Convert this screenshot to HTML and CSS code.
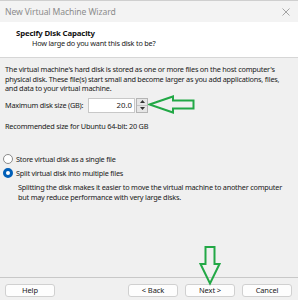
FILE: index.html
```html
<!DOCTYPE html>
<html>
<head>
<meta charset="utf-8">
<link rel="stylesheet" href="styles.css">
</head>
<body>
<div class="window">
  <div class="titlebar">
    <span class="title">New Virtual Machine Wizard</span>
    <svg class="close" width="8" height="8" viewBox="0 0 8 8"><path d="M0.5 0.5L7.5 7.5M7.5 0.5L0.5 7.5" stroke="#9a9a9a" stroke-width="0.9" fill="none"/></svg>
  </div>
  <div class="header">
    <div class="h-title">Specify Disk Capacity</div>
    <div class="h-sub">How large do you want this disk to be?</div>
  </div>
  <div class="content">
    <p class="desc">The virtual machine's hard disk is stored as one or more files on the host computer's physical disk. These file(s) start small and become larger as you add applications, files, and data to your virtual machine.</p>
    <div class="size-row">
      <span class="label">Maximum disk size (GB):</span>
      <div class="input">20.0</div>
      <div class="spin">
        <div class="spin-btn"><svg width="5" height="3" viewBox="0 0 5 3"><path d="M0 3L2.5 0L5 3Z" fill="#333"/></svg></div>
        <div class="spin-btn"><svg width="5" height="3" viewBox="0 0 5 3"><path d="M0 0L2.5 3L5 0Z" fill="#333"/></svg></div>
      </div>
      <svg class="arrow-left" width="48" height="20" viewBox="0 0 48 20"><path d="M1.5 9.5L25 1.5V5.5H45.5V13.5H25V17.5Z" fill="none" stroke="#22a846" stroke-width="2" stroke-linejoin="miter"/></svg>
    </div>
    <div class="recommend">Recommended size for Ubuntu 64-bit: 20 GB</div>
    <div class="options">
      <div class="radio-row"><span class="radio"></span><span>Store virtual disk as a single file</span></div>
      <div class="radio-row"><span class="radio checked"></span><span>Split virtual disk into multiple files</span></div>
      <p class="note">Splitting the disk makes it easier to move the virtual machine to another computer but may reduce performance with very large disks.</p>
    </div>
  </div>
  <div class="footer">
    <button class="btn">Help</button>
    <div class="spacer"></div>
    <button class="btn">&lt; Back</button>
    <button class="btn next">Next &gt;
      <svg class="arrow-down" width="22" height="40" viewBox="0 0 22 40"><path d="M6.5 1V18H1.5L11 37.5L20.5 18H15.5V1Z" fill="none" stroke="#22a846" stroke-width="2" stroke-linejoin="miter"/></svg>
    </button>
    <button class="btn">Cancel</button>
  </div>
</div>
</body>
</html>
```
FILE: styles.css
```css
* { box-sizing: border-box; }
html, body { margin: 0; padding: 0; }
body {
  width: 298px;
  height: 300px;
  overflow: hidden;
  background: #f0f0f0;
  font-family: "Noto Sans", "Open Sans", sans-serif;
  font-size: 7.3px;
  letter-spacing: -0.22px;
  color: #1a1a1a;
}
.window {
  height: 300px;
  display: flex;
  flex-direction: column;
  border-top: 1px solid #cfcfcf;
}
.titlebar {
  height: 21px;
  background: #f3f3f3;
  display: flex;
  align-items: center;
  justify-content: space-between;
  padding: 0 8px 0 5px;
}
.title {
  font-size: 8.6px;
  letter-spacing: -0.1px;
  color: #8c8c8c;
}
.close { display: block; }
.header {
  height: 36px;
  background: #ffffff;
  border-bottom: 1px solid #d6d6d6;
  padding: 6px 0 0 16px;
}
.h-title {
  font-weight: bold;
  font-size: 7.8px;
  letter-spacing: -0.15px;
  line-height: 10px;
  color: #111;
}
.h-sub {
  padding-left: 16px;
  line-height: 10px;
}
.content {
  flex: 1;
  padding: 7px 5px 0 5px;
}
.desc {
  margin: 0;
  line-height: 9.6px;
}
.size-row {
  display: flex;
  align-items: center;
  margin-top: 4px;
  height: 15px;
}
.label { width: 83px; white-space: nowrap; }
.input {
  width: 47px;
  height: 15px;
  background: #fff;
  border: 1px solid #c8c8c8;
  text-align: right;
  padding-right: 2px;
  line-height: 13px;
  font-size: 7.8px;
  letter-spacing: 0;
}
.spin {
  width: 12px;
  height: 15px;
  margin-left: 1px;
  display: flex;
  flex-direction: column;
  border: 1px solid #b4b4b4;
  background: #e6e6e6;
}
.spin-btn {
  flex: 1;
  display: flex;
  align-items: center;
  justify-content: center;
}
.spin-btn + .spin-btn { border-top: 1px solid #c4c4c4; }
.spin-btn svg { display: block; }
.arrow-left { display: block; }
.recommend {
  margin-top: 8px;
  line-height: 10px;
}
.options { margin-top: 21px; }
.radio-row {
  display: flex;
  align-items: center;
  height: 14px;
  gap: 3px;
  margin-left: -2px;
}
.radio {
  width: 10px;
  height: 10px;
  border-radius: 50%;
  border: 1px solid #8a8a8a;
  background: #fff;
  flex: none;
}
.radio.checked {
  border: 3px solid #005fb8;
  background: #fff;
}
.note {
  margin: 2px 0 0 13px;
  line-height: 10px;
}
.footer {
  border-top: 1px solid #c8c8c8;
  height: 23px;
  display: flex;
  align-items: flex-start;
  padding: 6px 6px 0 5px;
  gap: 7px;
}
.spacer { flex: 1; }
.btn {
  width: 50px;
  height: 13px;
  padding: 0;
  font-family: "Noto Sans", "Open Sans", sans-serif;
  font-size: 7.5px;
  letter-spacing: -0.1px;
  line-height: 11px;
  color: #1a1a1a;
  background: #fdfdfd;
  border: 1px solid #d0d0d0;
  border-radius: 3px;
  position: relative;
}
.arrow-down {
  position: absolute;
  left: 13px;
  top: -39px;
}
```
